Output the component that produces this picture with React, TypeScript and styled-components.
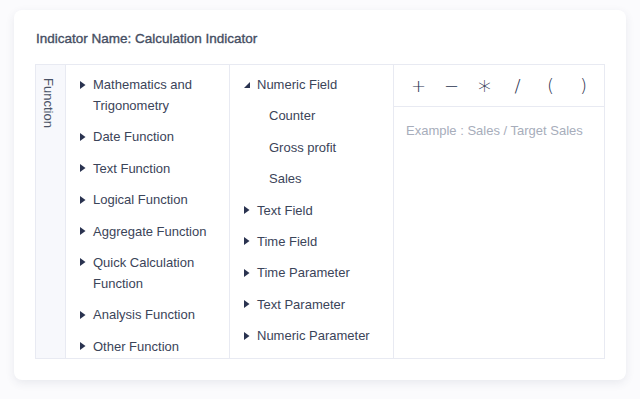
import React from 'react';
import styled, { createGlobalStyle } from 'styled-components';

const GlobalStyle = createGlobalStyle`
  html, body {
    margin: 0;
    padding: 0;
    background: #ffffff;
  }
  body {
    font-family: "Liberation Sans", Arial, sans-serif;
  }
`;

const Page = styled.div`
  width: 640px;
  height: 399px;
  box-sizing: border-box;
  padding: 10px 14px;
  background: #fbfbfd;
`;

const Card = styled.div`
  width: 612px;
  height: 370px;
  box-sizing: border-box;
  padding: 20px 21px 0 21px;
  background: #ffffff;
  border-radius: 8px;
  box-shadow: 0 3px 10px rgba(40, 50, 90, 0.09);
`;

const Title = styled.div`
  font-size: 13.5px;
  line-height: 17px;
  font-weight: 400;
  color: #454e62;
  -webkit-text-stroke: 0.35px #454e62;
  padding-left: 1px;
  margin-bottom: 17px;
`;

const Table = styled.div`
  display: grid;
  grid-template-columns: 30px 164px 164px 1fr;
  height: 295px;
  box-sizing: border-box;
  border: 1px solid #e8eaf2;
`;

const Column = styled.div<{ $tinted?: boolean; $last?: boolean }>`
  display: flex;
  flex-direction: column;
  min-width: 0;
  overflow: hidden;
  background: ${(p) => (p.$tinted ? '#f7f8fc' : '#ffffff')};
  border-right: ${(p) => (p.$last ? 'none' : '1px solid #e8eaf2')};
`;

const SideLabel = styled.div`
  writing-mode: vertical-rl;
  font-size: 13px;
  line-height: 16px;
  color: #4a5366;
  padding-top: 13px;
  padding-right: 9px;
`;

const List = styled.ul<{ $indent: number }>`
  list-style: none;
  margin: 0;
  padding: 9px 8px 0 ${(p) => p.$indent}px;
  display: flex;
  flex-direction: column;
  gap: 10.4px;
`;

const Item = styled.li<{ $child?: boolean }>`
  display: flex;
  align-items: flex-start;
  font-size: 13px;
  line-height: 21px;
  color: #3b4459;
  padding-left: ${(p) => (p.$child ? '25px' : '0')};
`;

const Caret = styled.span`
  flex: none;
  width: 13px;
  height: 21px;
  display: flex;
  align-items: center;
`;

const OperatorBar = styled.div`
  height: 42px;
  box-sizing: border-box;
  border-bottom: 1px solid #e8eaf2;
  display: grid;
  grid-template-columns: repeat(6, 1fr);
  align-items: center;
  padding: 0 4px 0 8px;
`;

const Operator = styled.span<{ $big?: boolean }>`
  text-align: center;
  font-size: ${(p) => (p.$big ? '26px' : '18px')};
  line-height: 20px;
  height: 20px;
  color: #2a3350;
  font-family: "DejaVu Sans", "Liberation Sans", sans-serif;
  font-weight: 300;
  transform: ${(p) => (p.$big ? 'translateY(5px)' : 'none')};
`;

const Editor = styled.div`
  padding: 15px 12px;
  font-size: 13px;
  line-height: 17px;
  color: #a7adbb;
`;

const RightCaret = () => (
  <svg width="6" height="8" viewBox="0 0 6 8">
    <polygon points="0,0 5.5,4 0,8" fill="#2a3350" />
  </svg>
);

const OpenCaret = () => (
  <svg width="6" height="6" viewBox="0 0 6 6">
    <polygon points="6,0 6,6 0,6" fill="#2a3350" />
  </svg>
);

const functions = [
  'Mathematics and Trigonometry',
  'Date Function',
  'Text Function',
  'Logical Function',
  'Aggregate Function',
  'Quick Calculation Function',
  'Analysis Function',
  'Other Function',
];

type FieldNode = { label: string; open?: boolean; children?: string[] };

const fields: FieldNode[] = [
  { label: 'Numeric Field', open: true, children: ['Counter', 'Gross profit', 'Sales'] },
  { label: 'Text Field' },
  { label: 'Time Field' },
  { label: 'Time Parameter' },
  { label: 'Text Parameter' },
  { label: 'Numeric Parameter' },
];

const operators = ['+', '−', '*', '/', '(', ')'];

export default function App() {
  return (
    <>
      <GlobalStyle />
      <Page>
        <Card>
          <Title>Indicator Name: Calculation Indicator</Title>
          <Table>
            <Column $tinted>
              <SideLabel>Function</SideLabel>
            </Column>
            <Column>
              <List $indent={14}>
                {functions.map((f) => (
                  <Item key={f}>
                    <Caret>
                      <RightCaret />
                    </Caret>
                    <span>{f}</span>
                  </Item>
                ))}
              </List>
            </Column>
            <Column>
              <List $indent={14}>
                {fields.map((node) => (
                  <React.Fragment key={node.label}>
                    <Item>
                      <Caret>{node.open ? <OpenCaret /> : <RightCaret />}</Caret>
                      <span>{node.label}</span>
                    </Item>
                    {node.open &&
                      node.children?.map((c) => (
                        <Item key={c} $child>
                          {c}
                        </Item>
                      ))}
                  </React.Fragment>
                ))}
              </List>
            </Column>
            <Column $last>
              <OperatorBar>
                {operators.map((o) => (
                  <Operator key={o} $big={o === '*'}>
                    {o}
                  </Operator>
                ))}
              </OperatorBar>
              <Editor>Example : Sales / Target Sales</Editor>
            </Column>
          </Table>
        </Card>
      </Page>
    </>
  );
}
